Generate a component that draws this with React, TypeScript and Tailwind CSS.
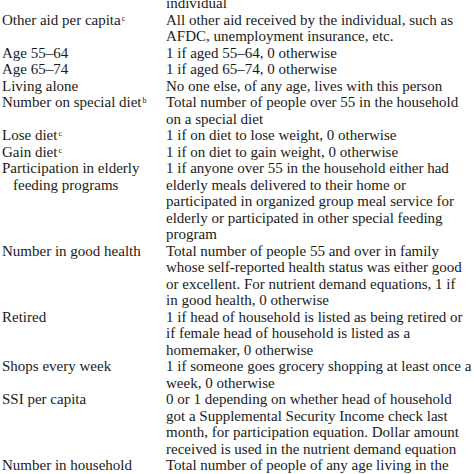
type Row = { label: string[]; sup?: string; lines: string[] };

const rows: Row[] = [
  { label: [], lines: ['individual'] },
  {
    label: ['Other aid per capita'],
    sup: 'c',
    lines: ['All other aid received by the individual, such as', 'AFDC, unemployment insurance, etc.'],
  },
  { label: ['Age 55–64'], lines: ['1 if aged 55–64, 0 otherwise'] },
  { label: ['Age 65–74'], lines: ['1 if aged 65–74, 0 otherwise'] },
  { label: ['Living alone'], lines: ['No one else, of any age, lives with this person'] },
  {
    label: ['Number on special diet'],
    sup: 'b',
    lines: ['Total number of people over 55 in the household', 'on a special diet'],
  },
  { label: ['Lose diet'], sup: 'c', lines: ['1 if on diet to lose weight, 0 otherwise'] },
  { label: ['Gain diet'], sup: 'c', lines: ['1 if on diet to gain weight, 0 otherwise'] },
  {
    label: ['Participation in elderly', 'feeding programs'],
    lines: [
      '1 if anyone over 55 in the household either had',
      'elderly meals delivered to their home or',
      'participated in organized group meal service for',
      'elderly or participated in other special feeding',
      'program',
    ],
  },
  {
    label: ['Number in good health'],
    lines: [
      'Total number of people 55 and over in family',
      'whose self-reported health status was either good',
      'or excellent. For nutrient demand equations, 1 if',
      'in good health, 0 otherwise',
    ],
  },
  {
    label: ['Retired'],
    lines: [
      '1 if head of household is listed as being retired or',
      'if female head of household is listed as a',
      'homemaker, 0 otherwise',
    ],
  },
  {
    label: ['Shops every week'],
    lines: ['1 if someone goes grocery shopping at least once a', 'week, 0 otherwise'],
  },
  {
    label: ['SSI per capita'],
    lines: [
      '0 or 1 depending on whether head of household',
      'got a Supplemental Security Income check last',
      'month, for participation equation. Dollar amount',
      'received is used in the nutrient demand equation',
    ],
  },
  { label: ['Number in household'], lines: ['Total number of people of any age living in the'] },
];

export default function App() {
  return (
    <div className="h-[474px] w-[474px] overflow-hidden bg-white">
      <div
        className="-mt-[5px] pl-[2px] text-[15px] leading-[16.5px] text-[#1a1a1a]"
        style={{ fontFamily: '"Liberation Serif", "Times New Roman", serif' }}
      >
        {rows.map((row, i) => (
          <div key={i} className="grid grid-cols-[164px_1fr]">
            <div className="whitespace-nowrap">
              {row.label.map((l, j) => (
                <div key={j} className={j > 0 ? 'pl-[11px]' : ''}>
                  {l}
                  {j === 0 && row.sup && (
                    <span className="relative -top-[4px] ml-[1px] text-[8px] leading-none">{row.sup}</span>
                  )}
                </div>
              ))}
            </div>
            <div className="whitespace-nowrap">
              {row.lines.map((l, j) => (
                <div key={j}>{l}</div>
              ))}
            </div>
          </div>
        ))}
      </div>
    </div>
  );
}
